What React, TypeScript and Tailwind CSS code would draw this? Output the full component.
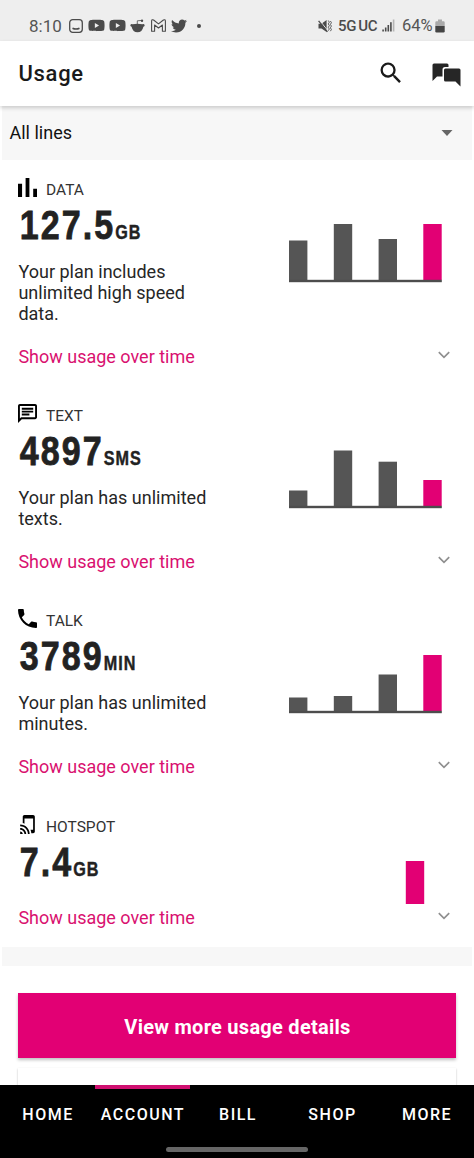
import type { ReactNode } from 'react';
import { FaTwitter, FaYoutube } from 'react-icons/fa';
import { MdSearch } from 'react-icons/md';

type Bar = { x: number; height: number; current?: boolean };

type UsageItem = {
  id: string;
  label: string;
  value: string;
  unit: string;
  description?: string;
  icon: ReactNode;
  bars: Bar[];
  baseline: boolean;
};

const DataIcon = () => (
  <svg viewBox="5 5 14 14" className="mb-[3px] w-[19px] h-[19px]">
    <path d="M5 9.2h3V19H5zM10.6 5h2.8v14h-2.8zm5.6 8H19v6h-2.8z" />
  </svg>
);

const TextIcon = () => (
  <svg viewBox="2 2 20 20" className="mb-[3px] w-[19px] h-[19px]">
    <path d="M4 4h16v12H5.17L4 17.17V4m0-2c-1.1 0-1.99.9-1.99 2L2 22l4-4h14c1.1 0 2-.9 2-2V4c0-1.1-.9-2-2-2H4zm2 10h8v2H6v-2zm0-3h12v2H6V9zm0-3h12v2H6V6z" />
  </svg>
);

const TalkIcon = () => (
  <svg viewBox="3 3 18 18" className="mb-[3px] w-[19px] h-[19px]">
    <path d="M6.62 10.79c1.44 2.83 3.76 5.14 6.59 6.59l2.2-2.2c.27-.27.67-.36 1.02-.24 1.12.37 2.33.57 3.57.57.55 0 1 .45 1 1V20c0 .55-.45 1-1 1-9.39 0-17-7.61-17-17 0-.55.45-1 1-1h3.5c.55 0 1 .45 1 1 0 1.25.2 2.45.57 3.57.11.35.03.74-.25 1.02l-2.2 2.2z" />
  </svg>
);

const HotspotIcon = () => (
  <svg viewBox="-0.5 1 22 22" className="mb-[3px] w-[19px] h-[19px]">
    <path d="M2 16v2c2.76 0 5 2.24 5 5h2c0-3.87-3.13-7-7-7zm0 4v3h3c0-1.66-1.34-3-3-3zm0-8v2c4.97 0 9 4.03 9 9h2c0-6.08-4.92-11-11-11zM17 1.01L7 1c-1.1 0-2 .9-2 2v7.37c.69.16 1.36.37 2 .64V5h10v13h-3.03c.52 1.25.84 2.59.95 4H17c1.1 0 2-.9 2-2V3c0-1.1-.9-1.99-2-1.99z" />
  </svg>
);

const usageItems: UsageItem[] = [
  {
    id: 'data',
    label: 'DATA',
    value: '127.5',
    unit: 'GB',
    description: 'Your plan includes unlimited high speed data.',
    icon: <DataIcon />,
    baseline: true,
    bars: [
      { x: 0, height: 39.5 },
      { x: 44.8, height: 56 },
      { x: 89.6, height: 41 },
      { x: 134.3, height: 56, current: true },
    ],
  },
  {
    id: 'text',
    label: 'TEXT',
    value: '4897',
    unit: 'SMS',
    description: 'Your plan has unlimited texts.',
    icon: <TextIcon />,
    baseline: true,
    bars: [
      { x: 0, height: 15.5 },
      { x: 44.8, height: 55.5 },
      { x: 89.6, height: 44.3 },
      { x: 134.3, height: 26, current: true },
    ],
  },
  {
    id: 'talk',
    label: 'TALK',
    value: '3789',
    unit: 'MIN',
    description: 'Your plan has unlimited minutes.',
    icon: <TalkIcon />,
    baseline: true,
    bars: [
      { x: 0, height: 13.5 },
      { x: 44.8, height: 15 },
      { x: 89.6, height: 36.5 },
      { x: 134.3, height: 56, current: true },
    ],
  },
  {
    id: 'hotspot',
    label: 'HOTSPOT',
    value: '7.4',
    unit: 'GB',
    icon: <HotspotIcon />,
    baseline: false,
    bars: [{ x: 116.8, height: 43, current: true }],
  },
];

const UsageChart = ({ bars, baseline }: { bars: Bar[]; baseline: boolean }) => {
  // Without a baseline the bars stand on the bottom edge of the chart
  const floor = baseline ? 56 : 43;

  return (
    <svg width="153" height={baseline ? 59 : 43} className="mt-12">
      {bars.map((bar) => (
        <rect
          key={bar.x}
          x={bar.x}
          y={floor - bar.height}
          width="18.4"
          height={bar.height}
          fill={bar.current ? '#e20074' : '#555555'}
        />
      ))}
      {baseline && <rect x="0" y="55.8" width="152.8" height="2.4" fill="#4d4d4d" />}
    </svg>
  );
};

const StatusBar = () => (
  <div className="flex h-[41px] items-center bg-[#eeeeee] pl-[29px] pr-[29px] pt-[10px] text-[#4b4b4b]">
    <span className="w-[40px] whitespace-nowrap text-[17px] leading-5 text-[#555555]">8:10</span>
    <svg viewBox="0 0 14 14" className="h-[14px] w-[14px]" fill="none" stroke="currentColor" strokeWidth="1.3">
      <rect x="0.7" y="0.7" width="12.6" height="12.6" rx="3" />
      <path d="M3.5 9.2q3.5 1.6 7 0" strokeWidth="1.6" />
    </svg>
    <FaYoutube className="ml-[5px] h-[17px] w-[17px]" />
    <FaYoutube className="ml-[4px] h-[17px] w-[17px]" />
    <svg viewBox="0 0 15 14" className="ml-[4px] h-[14px] w-[15px]" fill="currentColor">
      <path d="M0.3 6.2Q1 4.6 2.6 5.3Q7.5 4 12.4 5.3Q14 4.6 14.7 6.2Q14.6 7.4 13.4 7.8Q12.2 13.3 7.5 13.3Q2.8 13.3 1.6 7.8Q0.4 7.4 0.3 6.2z" />
      <path d="M7.3 5V1.8L11 1.5" fill="none" stroke="currentColor" strokeWidth="0.8" />
      <circle cx="12" cy="1.7" r="1.2" />
    </svg>
    <svg viewBox="0 0 15 13" className="ml-[6px] h-[13px] w-[15px]" fill="none" stroke="currentColor" strokeWidth="1.1" strokeLinejoin="round">
      <path d="M0.6 12.3V2Q0.8 0.2 2.6 1L7.5 4.9L12.4 1Q14.2 0.2 14.4 2V12.3H11.4V6L7.5 9L3.6 6V12.3z" />
    </svg>
    <FaTwitter className="ml-[5px] h-[16px] w-[16px]" />
    <span className="ml-[10px] h-1 w-1 rounded-full bg-[#4b4b4b]" />

    <div className="ml-auto flex items-center">
      <svg viewBox="0 0 14 14" className="h-[14px] w-[14px]" fill="currentColor">
        <path d="M0.5 4.8H3.5L8.6 1V13L3.5 9.5H0.5z" />
        <path d="M1.4 1L10 12" stroke="#eeeeee" strokeWidth="1" />
        <path d="M0.6 1.8L9.4 12.8" stroke="currentColor" strokeWidth="1.3" />
        <path d="M10.3 1.5l1 1.7l-1 1.7l1 1.7l-1 1.7l1 1.7l-1 1.7M12.4 2l1 1.7l-1 1.7l1 1.7l-1 1.7l1 1.7l-1 1.7" fill="none" stroke="currentColor" strokeWidth="0.9" />
      </svg>
      <span className="ml-[6px] flex w-[41px] gap-[2px] whitespace-nowrap text-[15px] font-medium leading-5 tracking-[-0.3px]">
        <span>5G</span>
        <span>UC</span>
      </span>
      <svg viewBox="0 0 13 13" className="ml-[3px] h-[13px] w-[13px]" fill="currentColor">
        <rect x="0.3" y="10.5" width="1.6" height="2" />
        <rect x="2.9" y="8.5" width="1.6" height="4" />
        <rect x="5.5" y="6" width="1.6" height="6.5" />
        <rect x="8.1" y="3.2" width="1.6" height="9.3" />
        <rect x="10.8" y="0.5" width="1.6" height="12" fill="#b5b5b5" />
      </svg>
      <span className="ml-[7px] w-[33px] whitespace-nowrap text-[16.5px] leading-5 text-[#555555]">64%</span>
      <svg viewBox="0 0 10 14" className="h-[14px] w-[10px]">
        <path d="M3 0.5H7V2.2H8.5Q9.7 2.2 9.7 3.5V7H0.3V3.5Q0.3 2.2 1.5 2.2H3z" fill="#aaaaaa" />
        <path d="M0.3 7H9.7V12.3Q9.7 13.6 8.5 13.6H1.5Q0.3 13.6 0.3 12.3z" fill="#444444" />
      </svg>
    </div>
  </div>
);

const Header = () => (
  <header className="relative z-10 flex h-[65px] items-center bg-white pl-[18.5px] pr-[13px] shadow-[0_2px_4px_rgba(0,0,0,0.18)]">
    <h1 className="flex-1 pt-px text-[22px] font-medium leading-7 tracking-[0.7px] text-[#1a1a1a]">Usage</h1>
    <button className="mb-[2px] mr-[27px]" aria-label="Search">
      <MdSearch className="h-[28px] w-[28px] text-[#1a1a1a]" />
    </button>
    <button aria-label="Messages">
      <svg viewBox="0 0 29 24" className="mt-[2px] h-[24px] w-[29px]" fill="#262626">
        <path d="M2 0.5H15Q16.5 0.5 16.5 2V4H13Q10.5 4 10.5 6.5V13.5H5L0.5 18V2Q0.5 0.5 2 0.5z" />
        <path d="M13.5 5.5H27Q28.5 5.5 28.5 7V23.5L23.5 18.5H13.5Q12 18.5 12 17V7Q12 5.5 13.5 5.5z" />
      </svg>
    </button>
  </header>
);

const UsageSection = ({ item }: { item: UsageItem }) => (
  <section className="pb-[19.2px] pl-[18.4px] pr-[24px] pt-4">
    <div className="flex items-start justify-between pr-[8px]">
      <div className="w-[200px] pb-[22px]">
        <div className="-ml-[0.4px] flex h-[26px] items-center">
          {item.icon}
          <span className="ml-[9px] pt-[2px] text-[15.5px] leading-5 text-[#333333]">{item.label}</span>
        </div>
        {/* Condensed figures */}
        <div className="flex h-[46px] origin-left scale-x-[0.83] items-baseline whitespace-nowrap pl-[2px] font-['Liberation_Sans',sans-serif] font-bold text-[#222222]">
          <span className="text-[41px] leading-[46px] tracking-[2.5px] [-webkit-text-stroke:0.8px_#222222]">{item.value}</span>
          <span className="text-[19.5px] tracking-[1.2px] [-webkit-text-stroke:0.4px_#222222]">{item.unit}</span>
        </div>
        {item.description && (
          <p className="mt-[13px] text-[18px] leading-[21px] tracking-[0.02px] text-[#262626]">{item.description}</p>
        )}
      </div>
      <UsageChart bars={item.bars} baseline={item.baseline} />
    </div>
    <button className="flex h-[21px] w-full items-center justify-between text-left">
      <span className="text-[18px] leading-[21px] text-[#d9116f]">Show usage over time</span>
      <svg viewBox="0 0 12 8" className="mb-[3px] h-[8px] w-[12px]" fill="none" stroke="#8f8f8f" strokeWidth="1.7">
        <path d="M0.8 1.2L6 6.4L11.2 1.2" />
      </svg>
    </button>
  </section>
);

const navItems = [
  { name: 'HOME', className: 'w-[95px]' },
  { name: 'ACCOUNT', className: 'w-[95px]', active: true },
  { name: 'BILL', className: 'w-[95px]' },
  { name: 'SHOP', className: 'w-[94px]' },
  { name: 'MORE', className: 'w-[95px]' },
];

const BottomNav = () => (
  <nav className="flex h-[73px] flex-col bg-black">
    <div className="flex">
      {navItems.map((item) => (
        <button key={item.name} className={`flex h-[62px] flex-col items-center ${item.className}`}>
          <span className={item.active ? 'h-1 w-full bg-[#cf1070]' : 'h-1 w-full'} />
          <span className="mt-[16px] pl-px text-[16px] font-medium leading-5 tracking-[1.5px] text-white">{item.name}</span>
        </button>
      ))}
    </div>
    <div className="mx-auto h-[5px] w-[142px] rounded-full bg-[#666666]" />
  </nav>
);

const App = () => {
  return (
    <div className="flex h-[1158px] w-[474px] flex-col overflow-hidden bg-white font-['Roboto',sans-serif]">
      <StatusBar />
      <Header />

      {/* Line selector */}
      <div className="mx-[2px] flex h-[54px] items-center justify-between bg-[#f7f7f7] pl-[7.5px] pr-[19px]">
        <span className="text-[18px] leading-6 text-[#111111]">All lines</span>
        <svg viewBox="0 0 12 6" className="h-[6px] w-[12px]" fill="#666666">
          <path d="M0.5 0H11.5L6 6z" />
        </svg>
      </div>

      {/* Usage list */}
      <main className="flex h-[787px] shrink-0 flex-col">
        {usageItems.map((item) => (
          <UsageSection key={item.id} item={item} />
        ))}
      </main>

      <div className="mx-[2px] h-[19px] shrink-0 bg-[#f7f7f7]" />

      {/* Details button and the top of the next card */}
      <div className="flex h-[119px] shrink-0 flex-col overflow-hidden px-[18px] pt-[27px]">
        <button className="h-[65px] shrink-0 bg-[#e20074] pl-px pt-[2px] text-[20px] font-bold tracking-[0.27px] text-white shadow-[0_2px_3px_rgba(0,0,0,0.25)]">
          View more usage details
        </button>
        <div className="mt-[10px] h-10 shrink-0 bg-white shadow-[0_1px_2px_rgba(0,0,0,0.25)]" />
      </div>

      <BottomNav />
    </div>
  );
};

export default App;
